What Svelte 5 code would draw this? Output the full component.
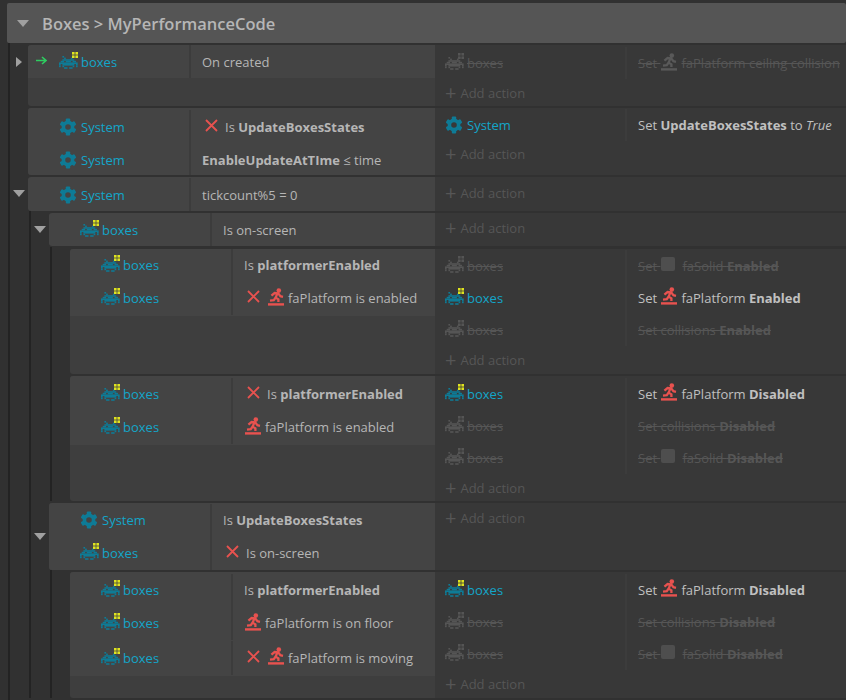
<script>
  const sys = 'sys', box = 'box';
  const boxOff = 'boxOff';
  const tree = [
    {
      h: 61, tri: 'right', arrow: true, at: 2,
      conds: [{ o: box, parts: [['t', 'On created']] }],
      acts: [{ o: boxOff, off: true, parts: [['t', 'Set '], ['run'], ['t', 'faPlatform ceiling collision']] }]
    },
    {
      h: 67, ct: 2, addh: 26,
      conds: [
        { o: sys, parts: [['x'], ['t', 'Is '], ['b', 'UpdateBoxesStates']] },
        { o: sys, parts: [['b', 'EnableUpdateAtTIme'], ['t', ' ≤ time']] }
      ],
      acts: [{ o: sys, parts: [['t', 'Set '], ['b', 'UpdateBoxesStates'], ['t', ' to '], ['i', 'True']] }]
    },
    {
      h: 34, ct: 1, at: 2, tri: 'down',
      conds: [{ o: sys, parts: [['t', 'tickcount%5 = 0']] }],
      acts: [],
      kids: [
        {
          h: 33, tri: 'down',
          conds: [{ o: box, parts: [['t', 'Is on-screen']] }],
          acts: [],
          kids: [
            {
              h: 125,
              conds: [
                { o: box, parts: [['t', 'Is '], ['b', 'platformerEnabled']] },
                { o: box, parts: [['x'], ['run'], ['t', 'faPlatform is enabled']] }
              ],
              acts: [
                { o: boxOff, off: true, parts: [['t', 'Set '], ['sq'], ['t', 'faSolid '], ['b', 'Enabled']] },
                { o: box, parts: [['t', 'Set '], ['run'], ['t', 'faPlatform '], ['b', 'Enabled']] },
                { o: boxOff, off: true, parts: [['t', 'Set collisions '], ['b', 'Enabled']] }
              ]
            },
            {
              h: 125, ct: 2, at: 2,
              conds: [
                { o: box, parts: [['x'], ['t', 'Is '], ['b', 'platformerEnabled']] },
                { o: box, parts: [['run'], ['t', 'faPlatform is enabled']] }
              ],
              acts: [
                { o: box, parts: [['t', 'Set '], ['run'], ['t', 'faPlatform '], ['b', 'Disabled']] },
                { o: boxOff, off: true, parts: [['t', 'Set collisions '], ['b', 'Disabled']] },
                { o: boxOff, off: true, parts: [['t', 'Set '], ['sq'], ['t', 'faSolid '], ['b', 'Disabled']] }
              ]
            }
          ]
        },
        {
          h: 67, ct: 1, tri: 'down',
          conds: [
            { o: sys, parts: [['t', 'Is '], ['b', 'UpdateBoxesStates']] },
            { o: box, parts: [['x'], ['t', 'Is on-screen']] }
          ],
          acts: [],
          kids: [
            {
              h: 126, ct: 2, at: 2,
              conds: [
                { o: box, parts: [['t', 'Is '], ['b', 'platformerEnabled']] },
                { o: box, parts: [['run'], ['t', 'faPlatform is on floor']] },
                { o: box, parts: [['x'], ['run'], ['t', 'faPlatform is moving']] }
              ],
              acts: [
                { o: box, parts: [['t', 'Set '], ['run'], ['t', 'faPlatform '], ['b', 'Disabled']] },
                { o: boxOff, off: true, parts: [['t', 'Set collisions '], ['b', 'Disabled']] },
                { o: boxOff, off: true, parts: [['t', 'Set '], ['sq'], ['t', 'faSolid '], ['b', 'Disabled']] }
              ]
            }
          ]
        }
      ]
    }
  ];
  const names = { sys: 'System', box: 'boxes', boxOff: 'boxes' };
  const invader = [
    [2,0,1,1],[8,0,1,1],[3,1,1,1],[7,1,1,1],[2,2,7,1],[1,3,2,1],[4,3,3,1],[8,3,2,1],[0,4,11,1],
    [0,5,1,1],[2,5,7,1],[10,5,1,1],[0,6,1,1],[2,6,1,1],[8,6,1,1],[10,6,1,1],[3,7,2,1],[6,7,2,1]
  ];
</script>

{#snippet objIcon(o)}
  {#if o === 'sys'}
    <svg class="gear" viewBox="0 0 18 18" width="18" height="18">
      <circle cx="9" cy="9" r="4.6" fill="none" stroke="currentColor" stroke-width="3.6" />
      {#each [0, 60, 120, 180, 240, 300] as a}
        <rect x="6.8" y="0.6" width="4.4" height="4" rx="1" fill="currentColor" transform="rotate({a} 9 9)" />
      {/each}
    </svg>
  {:else}
    <svg class="inv" class:off={o === 'boxOff'} viewBox="0 0 20 17" width="20" height="17">
      <g transform="translate(0 4) scale(1.7 1.6)">
        {#each invader as r}<rect x={r[0]} y={r[1]} width={r[2]} height={r[3]} fill="currentColor" />{/each}
      </g>
      <g class="dots">
        <rect x="13" y="0" width="2.6" height="2.6" /><rect x="16.4" y="0" width="2.6" height="2.6" />
        <rect x="13" y="3.4" width="2.6" height="2.6" /><rect x="16.4" y="3.4" width="2.6" height="2.6" />
      </g>
    </svg>
  {/if}
{/snippet}

{#snippet runner()}
  <svg class="run" viewBox="0 0 18 18" width="18" height="18">
    <circle cx="11.8" cy="2.6" r="2.3" fill="currentColor" />
    <path d="M4.4 7.6 L7.6 5 L11.2 5.4 L13.4 8.2 L16 8.8 M10.4 5.6 L8.6 9.6 L11.4 11.4 L11.4 14 M8.4 9.8 L6.8 12.2 L3 12.6" fill="none" stroke="currentColor" stroke-width="2.3" />
    <rect x="1" y="15.2" width="16" height="2.4" fill="currentColor" />
  </svg>
{/snippet}

{#snippet cross()}
  <svg class="cross" viewBox="0 0 13 13" width="13" height="13">
    <path d="M1 1 L12 12 M12 1 L1 12" stroke="currentColor" stroke-width="1.8" fill="none" />
  </svg>
{/snippet}

{#snippet parts(list)}
  {#each list as p}
    {#if p[0] === 't'}<span>{p[1]}</span>
    {:else if p[0] === 'b'}<b>{p[1]}</b>
    {:else if p[0] === 'i'}<i>{p[1]}</i>
    {:else if p[0] === 'x'}{@render cross()}
    {:else if p[0] === 'run'}{@render runner()}
    {:else if p[0] === 'sq'}<span class="sq"></span>
    {/if}
  {/each}
{/snippet}

{#snippet events(list)}
  {#each list as e}
    <div class="node">
      <div class="line">
        <div class="gutter" style="height:{e.conds.length * 33.5}px">
          {#if e.tri}<span class="tri {e.tri}"></span>{/if}
        </div>
        <div class="event" style="height:{e.h}px">
          <div class="conds">
            {#each e.conds as c, i}
              <div class="row" style="padding-top:{i === 0 ? (e.ct ?? 0) : 0}px">
                <div class="obj">
                  {#if e.arrow}
                    <svg class="arrow" viewBox="0 0 11 9" width="11" height="9"><path d="M0 4.5 H9 M6 1 L10 4.5 L6 8" fill="none" stroke="currentColor" stroke-width="1.6" /></svg>
                  {/if}
                  {@render objIcon(c.o)}<span class="name">{names[c.o]}</span>
                </div>
                <div class="txt">{@render parts(c.parts)}</div>
              </div>
            {/each}
          </div>
          <div class="acts" style="padding-top:{e.at ?? 1}px">
            {#each e.acts as a}
              <div class="arow" class:dis={a.off}>
                <div class="aobj">
                  {@render objIcon(a.o)}<span class="name">{names[a.o]}</span>
                </div>
                <div class="txt">{@render parts(a.parts)}</div>
              </div>
            {/each}
            <div class="add" style="height:{e.addh ?? 28}px"><span class="plus">+</span>Add action</div>
          </div>
        </div>
      </div>
      {#if e.kids}
        <div class="kids">{@render events(e.kids)}</div>
      {/if}
    </div>
  {/each}
{/snippet}

<div class="page">
  <div class="group">
    <span class="tri down big"></span>
    <span class="title">Boxes &gt; MyPerformanceCode</span>
  </div>
  <div class="kids top">{@render events(tree)}</div>
</div>

<style>
  :global(body) { margin: 0; background: #313131; }
  .page {
    width: 846px; height: 700px; overflow: hidden; box-sizing: border-box;
    background: #313131; padding-top: 3px;
    font-family: "Open Sans", "Noto Sans", sans-serif; font-size: 13px; color: #b6b6b6;
  }
  .group {
    height: 40px; margin-left: 7px; background: #555; border-radius: 2px;
    display: flex; align-items: center; box-sizing: border-box; padding-left: 10px; gap: 13px;
  }
  .title { font-size: 16.5px; font-weight: 600; color: #b6b6b6; }
  .kids { border-left: 2px solid #232323; margin-left: 0; display: flex; flex-direction: column; gap: 2px; padding-top: 2px; }
  .kids.top { margin-left: 8px; height: 660px; }
  .node .kids { margin-left: 19px; }
  .node { display: flex; flex-direction: column; }
  .line { display: flex; align-items: flex-start; }
  .gutter { width: 18px; flex: none; display: flex; align-items: center; justify-content: center; }
  .tri { display: block; width: 0; height: 0; }
  .tri.down { border-left: 6px solid transparent; border-right: 6px solid transparent; border-top: 7px solid #a0a0a0; }
  .tri.right { border-top: 5px solid transparent; border-bottom: 5px solid transparent; border-left: 6px solid #a0a0a0; }
  .event { flex: 1; display: flex; min-width: 0; }
  .conds { flex: 1; min-width: 0; background: #3e3e3e; border-radius: 3px 0 0 3px; overflow: hidden; }
  .row { display: flex; height: 33px; background: #444; }
  .row + .row { height: 33px; padding-bottom: 1px; }
  .row + .row + .row { height: 34px; }
  .obj {
    width: 163px; flex: none; box-sizing: border-box; display: flex; align-items: center;
    padding-left: 31px; position: relative; border-right: 2px solid #3c3c3c;
  }
  .arrow { position: absolute; left: 8px; top: 11px; color: #2ecc60; }
  .name { color: #13a6c9; margin-left: 2px; }
  .inv { color: #0e7b96; flex: none; margin-top: -3px; }
  .inv .dots { fill: #dfe31f; }
  .inv.off { color: #555; }
  .inv.off .dots { fill: #555; }
  .gear { color: #0e7b96; flex: none; margin-right: 2px; }
  .txt { flex: 1; min-width: 0; display: flex; align-items: center; padding-left: 11px; white-space: pre; overflow: hidden; }
  b { font-weight: 700; }
  i { font-style: italic; }
  .cross { color: #e8524f; margin: 0 7px 3px 3px; flex: none; }
  .run { color: #e8524f; margin: 0 3px 3px 0; flex: none; }
  .dis .run { color: #595959; }
  .sq { width: 14px; height: 14px; border-radius: 2px; background: #4e4e4e; margin: 0 7px 3px 1px; flex: none; }
  .acts { width: 411px; flex: none; background: #383838; box-sizing: border-box; }
  .arow { display: flex; height: 32px; }
  .aobj {
    width: 192px; flex: none; box-sizing: border-box; display: flex; align-items: center; padding-left: 10px;
    border-right: 2px solid #3c3c3c;
  }
  .arow .txt { color: #c0c0c0; }
  .dis .txt, .dis .name { color: #565656; text-decoration: line-through; }
  .dis .txt b { color: #565656; text-decoration: line-through; }
  .add { display: flex; align-items: center; padding-left: 10px; color: #565656; white-space: pre; }
  .plus { font-size: 20px; line-height: 1; margin-right: 4px; }
</style>
